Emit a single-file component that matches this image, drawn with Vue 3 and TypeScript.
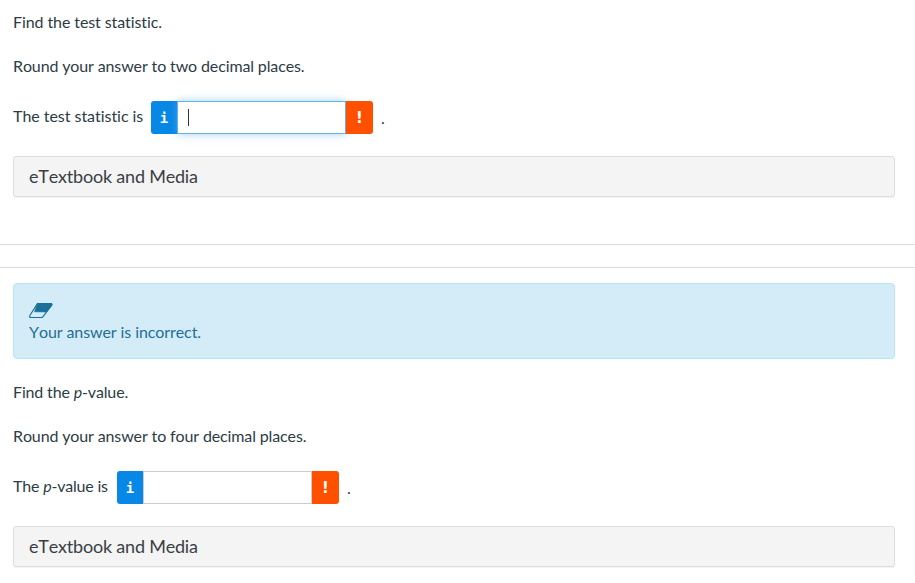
<script setup lang="ts">
</script>

<template>
  <main class="page">
    <section class="part">
      <p class="line">Find the test statistic.</p>
      <p class="line tight">Round your answer to two decimal places.</p>
      <div class="answer">
        <span class="label stat">The test statistic is</span>
        <span class="info">i</span>
        <span class="field focused"><span class="caret"></span></span>
        <span class="warn">!</span>
        <span class="dot">.</span>
      </div>
      <div class="media">eTextbook and Media</div>
    </section>
    <hr class="rule one" />
    <hr class="rule two" />
    <section class="part">
      <div class="alert">
        <svg class="eraser" width="24" height="15" viewBox="0 0 24 15">
          <path d="M8.5.5H21.6c1.2 0 1.7 1 1 2L14 13.6c-.5.6-1 .9-1.8.9H2c-1.3 0-1.9-1-1.1-2z" fill="none" stroke="#1b7099" stroke-width="1.2" />
          <path d="M8.5.5H21.6c1.2 0 1.7 1 1 2L17.5 9 5.5 8.8z" fill="#1b7099" stroke="#1b7099" stroke-width=".6" />
        </svg>
        <div class="alert-text">Your answer is incorrect.</div>
      </div>
      <p class="line tight-p">Find the <i>p</i>-value.</p>
      <p class="line tight">Round your answer to four decimal places.</p>
      <div class="answer">
        <span class="label pval">The <i>p</i>-value is</span>
        <span class="info">i</span>
        <span class="field"></span>
        <span class="warn">!</span>
        <span class="dot">.</span>
      </div>
      <div class="media">eTextbook and Media</div>
    </section>
  </main>
</template>

<style scoped>
.page { width: 915px; height: 583px; overflow: hidden; font-family: Lato, sans-serif; font-size: 16px; color: #2d3b45; letter-spacing: -0.09px; font-kerning: none; }
.part { padding: 0 20px 0 13px; }
.line { margin: 0; height: 44px; line-height: 20px; padding-top: 12px; box-sizing: border-box; }
.line.tight { letter-spacing: -0.13px; }
.line.tight-p { letter-spacing: -0.15px; }
.answer { display: flex; align-items: center; height: 33px; margin-top: 13px; }
.label { padding-bottom: 4px; white-space: nowrap; }
.label.stat { width: 130px; letter-spacing: -0.04px; }
.label.pval { width: 96px; letter-spacing: -0.2px; }
.info, .warn { height: 33px; color: #fff; display: flex; align-items: center; justify-content: center; font-weight: 700; box-sizing: border-box; }
.info { width: 26px; background: #0787e6; border-radius: 3px 0 0 3px; margin-left: 8px; font-family: "DejaVu Sans Mono", monospace; font-size: 14px; }
.warn { width: 27px; background: #ff5000; border-radius: 0 3px 3px 0; font-family: "DejaVu Sans", sans-serif; font-size: 15px; }
.field { width: 169px; height: 33px; border: 1px solid #ccc; box-sizing: border-box; display: flex; align-items: center; padding-left: 10px; background: #fff; }
.field.focused { border-color: #66afe9; box-shadow: 0 0 8px rgba(102,175,233,.6); }
.caret { width: 1px; height: 17px; background: #333; }
.dot { margin-left: 8px; }
.media { margin-top: 22px; height: 41px; background: #f4f4f4; border: 1px solid #ddd; border-radius: 3px; box-sizing: border-box; padding-left: 15px; font-size: 18px; line-height: 38px; color: #3a3f44; letter-spacing: -0.2px; box-shadow: 0 1px 1px rgba(0,0,0,.05); }
.rule { margin: 0; border: 0; border-top: 1px solid #ddd; }
.rule.one { margin-top: 47px; }
.rule.two { margin-top: 22px; }
.alert { margin-top: 15px; margin-bottom: 11px; height: 76px; box-sizing: border-box; background: #d4ecf8; border: 1px solid #b5e6f2; border-radius: 4px; padding: 19px 15px 0; color: #1f6f96; }
.eraser { display: block; }
.alert-text { margin-top: 4px; line-height: 20px; }
</style>
